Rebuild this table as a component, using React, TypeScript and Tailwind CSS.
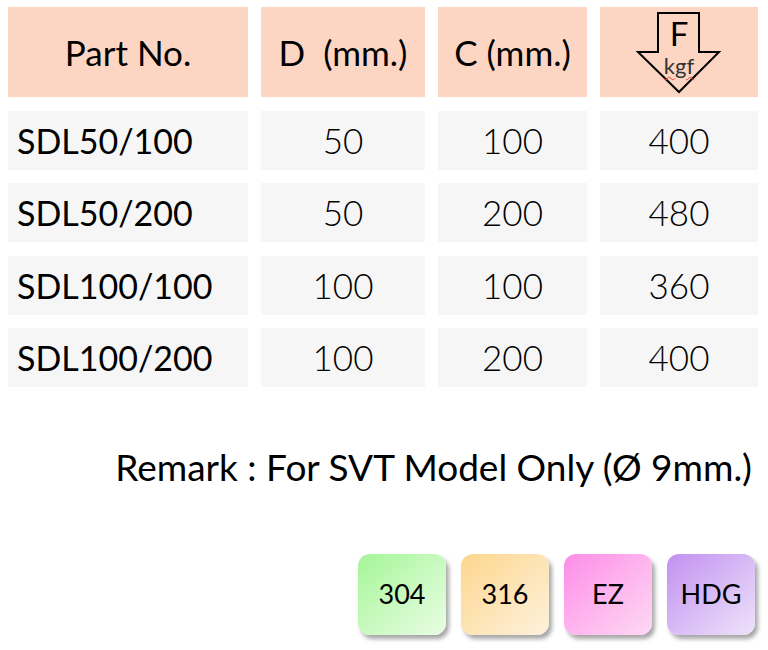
import React from "react";

const rows = [
  ["SDL50/100", "50", "100", "400"],
  ["SDL50/200", "50", "200", "480"],
  ["SDL100/100", "100", "100", "360"],
  ["SDL100/200", "100", "200", "400"],
];

const font = { fontFamily: "Lato, 'Open Sans', sans-serif" };

function ForceCell() {
  return (
    <div className="relative h-[90px] bg-[#fdd6c3]">
      <svg className="absolute left-0 top-0" width="158" height="90" viewBox="0 0 158 90">
        <polygon
          points="58,6 99,6 99,45 119,45 79,85 38,45 58,45"
          fill="none"
          stroke="#000"
          strokeWidth="2"
          strokeLinejoin="miter"
        />
      </svg>
      <div className="absolute left-0 top-[6px] w-full text-center text-[33px] leading-[40px] text-black">F</div>
      <div className="absolute left-0 top-[46px] w-full text-center text-[22px] leading-[26px] text-[#333]">
        <span className="underline decoration-wavy decoration-[#e04040] decoration-1 underline-offset-2">kgf</span>
      </div>
    </div>
  );
}

const badges = [
  { label: "304", cls: "bg-gradient-to-br from-[#a4f597] to-[#e9fde4]" },
  { label: "316", cls: "bg-gradient-to-br from-[#fdd68c] to-[#fdf1dc]" },
  { label: "EZ", cls: "bg-gradient-to-br from-[#fc8ce8] to-[#fdd9f3]" },
  { label: "HDG", cls: "bg-gradient-to-br from-[#c290f0] to-[#eee3f9]" },
];

export default function App() {
  return (
    <div className="w-[768px] h-[650px] bg-white text-black overflow-hidden" style={font}>
      <div className="pt-[7px] pl-[8px]">
        <div className="grid grid-cols-[240px_164px_149px_158px] gap-x-[13px] gap-y-[13.5px]">
          <div className="h-[90px] bg-[#fdd6c3] flex items-center justify-center text-[35px]">Part No.</div>
          <div className="h-[90px] bg-[#fdd6c3] flex items-center justify-center text-[35px] whitespace-pre">D  (mm.)</div>
          <div className="h-[90px] bg-[#fdd6c3] flex items-center justify-center text-[35px]">C (mm.)</div>
          <ForceCell />
          {rows.map((r) => (
            <React.Fragment key={r[0]}>
              <div className="h-[59px] bg-[#f6f6f6] flex items-center pl-[9px] text-[34px]">{r[0]}</div>
              <div className="h-[59px] bg-[#f6f6f6] flex items-center justify-center text-[35px] font-light">{r[1]}</div>
              <div className="h-[59px] bg-[#f6f6f6] flex items-center justify-center text-[35px] font-light">{r[2]}</div>
              <div className="h-[59px] bg-[#f6f6f6] flex items-center justify-center text-[35px] font-light">{r[3]}</div>
            </React.Fragment>
          ))}
        </div>
      </div>
      <div className="mt-[60px] pr-[16px] text-right text-[37px] leading-[40px]">Remark : For SVT Model Only (Ø 9mm.)</div>
      <div className="mt-[67px] pr-[13px] flex justify-end gap-[15px]">
        {badges.map((b) => (
          <div
            key={b.label}
            className={`w-[88px] h-[81px] rounded-[12px] flex items-center justify-center text-[27px] shadow-[3px_4px_4px_rgba(0,0,0,0.35)] ${b.cls}`}
          >
            {b.label}
          </div>
        ))}
      </div>
    </div>
  );
}
